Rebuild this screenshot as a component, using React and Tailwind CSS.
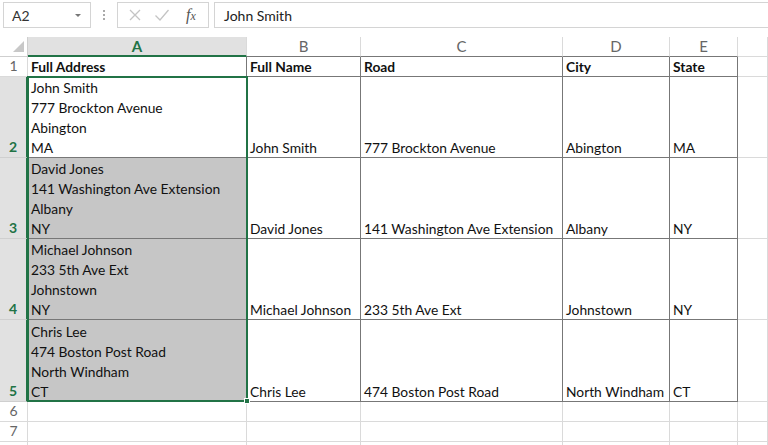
import React from 'react';

const cols = ['A', 'B', 'C', 'D', 'E', ''];

const rows = [
  { n: 1, h: 'h-[20px]', cells: ['Full Address', 'Full Name', 'Road', 'City', 'State'], bold: true },
  { n: 2, h: 'h-[81px]', cells: [['John Smith', '777 Brockton Avenue', 'Abington', 'MA'], 'John Smith', '777 Brockton Avenue', 'Abington', 'MA'] },
  { n: 3, h: 'h-[81px]', cells: [['David Jones', '141 Washington Ave Extension', 'Albany', 'NY'], 'David Jones', '141 Washington Ave Extension', 'Albany', 'NY'] },
  { n: 4, h: 'h-[81px]', cells: [['Michael Johnson', '233 5th Ave Ext', 'Johnstown', 'NY'], 'Michael Johnson', '233 5th Ave Ext', 'Johnstown', 'NY'] },
  { n: 5, h: 'h-[82px]', cells: [['Chris Lee', '474 Boston Post Road', 'North Windham', 'CT'], 'Chris Lee', '474 Boston Post Road', 'North Windham', 'CT'] },
  { n: 6, h: 'h-[20px]', cells: [] },
  { n: 7, h: 'h-[20px]', cells: [] },
  { n: 8, h: 'h-[20px]', cells: [], hidden: true },
];

function Toolbar() {
  return (
    <div className="h-[37px] flex items-start pt-[2px] pl-[3px] bg-white">
      <div className="w-[88px] h-[26px] border border-[#d4d4d4] flex items-center justify-between pl-[8px] pr-[8px] text-[14px] text-[#333]">
        <span>A2</span>
        <svg width="8" height="5" viewBox="0 0 8 5"><path d="M1 1 L4 4 L7 1 Z" fill="#777" /></svg>
      </div>
      <div className="w-[26px] h-[26px] flex flex-col items-center justify-center gap-[2px]">
        <span className="w-[2px] h-[2px] bg-[#aaa]" />
        <span className="w-[2px] h-[2px] bg-[#aaa]" />
        <span className="w-[2px] h-[2px] bg-[#aaa]" />
      </div>
      <div className="w-[92px] h-[26px] border border-[#d4d4d4] flex items-center pl-[10px] gap-[12px]">
        <svg width="14" height="14" viewBox="0 0 14 14"><path d="M2 2 L12 12 M12 2 L2 12" stroke="#c4c4c4" strokeWidth="1.3" /></svg>
        <svg width="16" height="14" viewBox="0 0 16 14"><path d="M1.5 7.5 L6 12 L14.5 2" stroke="#c4c4c4" strokeWidth="1.3" fill="none" /></svg>
        <span className="ml-[4px] italic text-[16px] text-[#555] font-['Liberation_Serif',serif] leading-none">
          f<span className="text-[12px]">x</span>
        </span>
      </div>
      <div className="flex-1 h-[26px] ml-[5px] border border-[#d4d4d4] border-r-0 flex items-center pl-[9px] text-[14px] text-[#222]">
        John Smith
      </div>
    </div>
  );
}

function Cell({ value, bold, selected, col, row, h }) {
  const lines = Array.isArray(value) ? value : value ? [value] : [];
  const isTable = row <= 5 && col < 5;
  const border = isTable ? 'border-[#777]' : 'border-[#dadada]';
  const bg = selected ? 'bg-[#c6c6c6]' : 'bg-white';
  return (
    <div className={`${h} border-r border-b ${border} ${bg} flex flex-col justify-end pl-[3px] overflow-hidden whitespace-nowrap`}>
      {lines.map((l) => (
        <div key={l} className={`leading-[20px] translate-y-[1px] text-[13.8px] text-[#111] ${bold ? 'font-bold' : ''}`}>{l}</div>
      ))}
    </div>
  );
}

export default function App() {
  return (
    <div className="w-[768px] h-[445px] overflow-hidden bg-white font-['Lato',sans-serif] select-none">
      <Toolbar />
      <div className="relative">
        <div className="grid grid-cols-[28px_219px_114px_202px_107px_68px_1fr]">
          {/* column headers */}
          <div className="h-[20px] border-r border-b border-[#cfcfcf] bg-white flex items-end justify-end pr-[3px] pb-[4px]">
            <svg width="11" height="11" viewBox="0 0 11 11"><path d="M11 0 L11 11 L0 11 Z" fill="#c8c8c8" /></svg>
          </div>
          {cols.map((c, i) => (
            <div
              key={i}
              className={`h-[20px] flex items-center justify-center text-[15px] border-r border-[#dadada] ${
                i === 0
                  ? 'bg-[#e1e1e1] text-[#217346] font-bold border-b-2 border-b-[#217346]'
                  : i < 5
                  ? 'bg-white text-[#666] border-b border-b-[#777]'
                  : 'bg-white text-[#666] border-b border-b-[#dadada]'
              }`}
            >
              {c}
            </div>
          ))}

          {rows.map((r) => {
            const sel = r.n >= 2 && r.n <= 5;
            return (
              <React.Fragment key={r.n}>
                <div
                  className={`${r.h} border-b border-r flex items-end justify-center leading-[20px] text-[14px] ${
                    sel
                      ? 'bg-[#e1e1e1] text-[#217346] font-bold border-b-[#cfcfcf] border-r-[#217346] border-r-2'
                      : 'bg-white text-[#666] border-[#dadada]'
                  }`}
                >
                  {r.hidden ? '' : r.n}
                </div>
                {[0, 1, 2, 3, 4, 5].map((ci) => (
                  <Cell
                    key={ci}
                    col={ci}
                    row={r.n}
                    h={r.h}
                    value={r.cells[ci]}
                    bold={r.bold}
                    selected={ci === 0 && r.n >= 3 && r.n <= 5}
                  />
                ))}
              </React.Fragment>
            );
          })}
        </div>
        {/* selection outline A2:A5 */}
        <div className="absolute left-[27px] top-[39px] w-[221px] h-[326px] border-2 border-[#217346] pointer-events-none">
          <div className="absolute -right-[4px] -bottom-[4px] w-[6px] h-[6px] bg-[#217346] border border-white" />
        </div>
      </div>
    </div>
  );
}
